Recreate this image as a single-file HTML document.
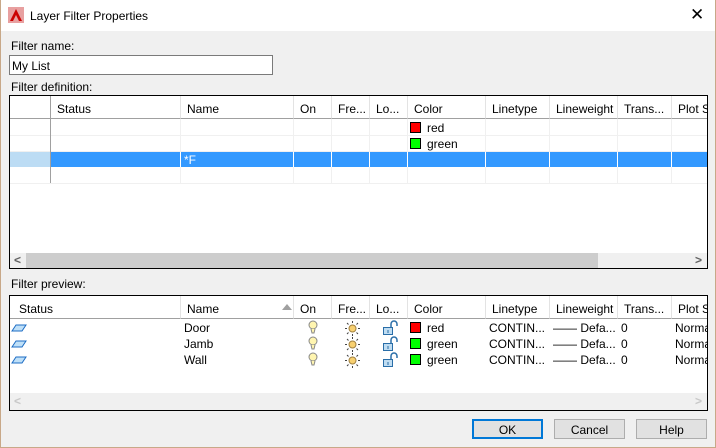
<!DOCTYPE html><html><head><style>
*{box-sizing:border-box;margin:0;padding:0}
body{width:716px;height:448px;overflow:hidden;font:12px "Liberation Sans",sans-serif;color:#000;background:#c8a888;position:relative}
.win{position:absolute;left:1px;top:0;width:714px;height:447px;background:#f0f0f0}
.title{position:absolute;left:0;top:0;width:714px;height:31px;background:#fff}
.a{position:absolute;white-space:nowrap}
.grid{position:absolute;left:8px;width:699px;border:1px solid #000;background:#fff;overflow:hidden}
.hd{position:absolute;top:0;height:23px;border-right:1px solid #e3e3e3;border-bottom:1px solid #a0a0a0;padding:6px 0 0 6px;white-space:nowrap;overflow:hidden}
.vl{position:absolute;width:1px;background:#f0f0f0}
.hl{position:absolute;height:1px;background:#f0f0f0}
.sw{display:inline-block;width:11px;height:11px;border:1px solid #000;vertical-align:-1px;margin-right:6px}
.btn{position:absolute;top:419px;width:71px;height:20px;border:1px solid #adadad;background:#e1e1e1;text-align:center;padding-top:3px}
</style></head><body><div class="win">
<div class="title">
<svg class="a" style="left:7px;top:7px" width="16" height="16"><rect width="16" height="16" fill="#e8a0a0"/><path d="M2 14 L8 2 L14 14 L11 14 L8 8 L5 14Z" fill="#c00"/></svg>
<div class="a" style="left:29px;top:9px;font-size:12px">Layer Filter Properties</div>
<div class="a" style="left:689px;top:5px;font-size:17px">✕</div>
</div>
<div class="a" style="left:10px;top:39px">Filter name:</div>
<div class="a" style="left:8px;top:55px;width:264px;height:20px;border:1px solid #7a7a7a;background:#fff;padding:3px 2px">My List</div>
<div class="a" style="left:10px;top:80px">Filter definition:</div>

<div class="grid" style="top:95px;height:174px">
<div class="hd" style="left:0;width:41px;border-right:1px solid #a0a0a0"></div>
<div class="hd" style="left:41px;width:130px">Status</div>
<div class="hd" style="left:171px;width:113px">Name</div>
<div class="hd" style="left:284px;width:38px">On</div>
<div class="hd" style="left:322px;width:38px">Fre...</div>
<div class="hd" style="left:360px;width:38px">Lo...</div>
<div class="hd" style="left:398px;width:78px">Color</div>
<div class="hd" style="left:476px;width:64px">Linetype</div>
<div class="hd" style="left:540px;width:68px">Lineweight</div>
<div class="hd" style="left:608px;width:54px">Trans...</div>
<div class="hd" style="left:662px;width:40px">Plot S</div>
<div class="hl" style="left:0;top:39px;width:699px"></div>
<div class="hl" style="left:0;top:55px;width:699px"></div>
<div class="hl" style="left:0;top:87px;width:699px"></div>
<div class="vl" style="left:170px;top:23px;height:64px"></div>
<div class="vl" style="left:283px;top:23px;height:64px"></div>
<div class="vl" style="left:321px;top:23px;height:64px"></div>
<div class="vl" style="left:359px;top:23px;height:64px"></div>
<div class="vl" style="left:397px;top:23px;height:64px"></div>
<div class="vl" style="left:475px;top:23px;height:64px"></div>
<div class="vl" style="left:539px;top:23px;height:64px"></div>
<div class="vl" style="left:607px;top:23px;height:64px"></div>
<div class="vl" style="left:661px;top:23px;height:64px"></div>
<div class="a" style="left:40px;top:23px;width:1px;height:64px;background:#a0a0a0"></div>
<div class="a" style="left:0;top:56px;width:40px;height:15px;background:#bcdcf4"></div>
<div class="a" style="left:41px;top:56px;width:658px;height:15px;background:#3399ff"></div>
<div class="a" style="left:170px;top:56px;width:1px;height:15px;background:#fff"></div>
<div class="a" style="left:283px;top:56px;width:1px;height:15px;background:#fff"></div>
<div class="a" style="left:321px;top:56px;width:1px;height:15px;background:#fff"></div>
<div class="a" style="left:359px;top:56px;width:1px;height:15px;background:#fff"></div>
<div class="a" style="left:397px;top:56px;width:1px;height:15px;background:#fff"></div>
<div class="a" style="left:475px;top:56px;width:1px;height:15px;background:#fff"></div>
<div class="a" style="left:539px;top:56px;width:1px;height:15px;background:#fff"></div>
<div class="a" style="left:607px;top:56px;width:1px;height:15px;background:#fff"></div>
<div class="a" style="left:661px;top:56px;width:1px;height:15px;background:#fff"></div>
<div class="a" style="left:174px;top:57px;color:#fff">*F</div>
<div class="a" style="left:400px;top:25px"><span class="sw" style="background:#f00"></span>red</div>
<div class="a" style="left:400px;top:41px"><span class="sw" style="background:#0f0"></span>green</div>
<div class="a" style="left:0;top:157px;width:699px;height:16px;background:#f0f0f0"></div>
<div class="a" style="left:16px;top:157px;width:572px;height:16px;background:#cdcdcd"></div>
<div class="a" style="left:4px;top:157px;color:#606060;font-weight:bold">&lt;</div>
<div class="a" style="left:685px;top:157px;color:#606060;font-weight:bold">&gt;</div>
</div>

<div class="a" style="left:10px;top:277px">Filter preview:</div>
<div class="grid" style="top:295px;height:116px">
<div class="hd" style="left:0;width:171px;padding-left:9px">Status</div>
<div class="hd" style="left:171px;width:113px">Name<span style="position:absolute;left:101px;top:8px;width:0;height:0;border:5px solid transparent;border-bottom:6px solid #a0a0a0;border-top:0"></span></div>
<div class="hd" style="left:284px;width:38px">On</div>
<div class="hd" style="left:322px;width:38px">Fre...</div>
<div class="hd" style="left:360px;width:38px">Lo...</div>
<div class="hd" style="left:398px;width:78px">Color</div>
<div class="hd" style="left:476px;width:64px">Linetype</div>
<div class="hd" style="left:540px;width:68px">Lineweight</div>
<div class="hd" style="left:608px;width:54px">Trans...</div>
<div class="hd" style="left:662px;width:40px">Plot S</div>
<div class="a" style="left:0;top:24px;width:699px;line-height:16px">
<div style="position:relative;height:16px"><svg class="a" style="left:1px;top:4px" width="16" height="8"><path d="M1 7 L5 1 L15 1 L11 7Z" fill="#bfe0f8" stroke="#1c6cc4"/></svg><span class="a" style="left:174px">Door</span><svg class="a" style="left:298px;top:0" width="10" height="15"><circle cx="5" cy="5" r="4" fill="#fff5b0" stroke="#888"/><path d="M3 9 L4 13 L6 13 L7 9" fill="#fff5b0" stroke="#888"/></svg><svg class="a" style="left:335px;top:1px" width="15" height="15"><circle cx="7.5" cy="7.5" r="3.5" fill="#f8d070" stroke="#a08040"/><path d="M7.5 0v2M7.5 13v2M0 7.5h2M13 7.5h2M2 2l1.5 1.5M11.5 11.5L13 13M2 13l1.5-1.5M11.5 3.5L13 2" stroke="#444"/></svg><svg class="a" style="left:372px;top:0" width="16" height="16"><path d="M9 8V4a3 3 0 0 1 6 0v2" fill="none" stroke="#2a6ea8" stroke-width="1.5"/><rect x="1.5" y="7.5" width="9" height="7" fill="#c0ddf2" stroke="#2a6ea8"/><path d="M6 10v3" stroke="#2a6ea8"/></svg><span class="a" style="left:400px"><span class="sw" style="background:#f00"></span>red</span><span class="a" style="left:479px">CONTIN...</span><span class="a" style="left:543px">—— Defa...</span><span class="a" style="left:611px">0</span><span class="a" style="left:665px">Norma</span></div>
<div style="position:relative;height:16px"><svg class="a" style="left:1px;top:4px" width="16" height="8"><path d="M1 7 L5 1 L15 1 L11 7Z" fill="#bfe0f8" stroke="#1c6cc4"/></svg><span class="a" style="left:174px">Jamb</span><svg class="a" style="left:298px;top:0" width="10" height="15"><circle cx="5" cy="5" r="4" fill="#fff5b0" stroke="#888"/><path d="M3 9 L4 13 L6 13 L7 9" fill="#fff5b0" stroke="#888"/></svg><svg class="a" style="left:335px;top:1px" width="15" height="15"><circle cx="7.5" cy="7.5" r="3.5" fill="#f8d070" stroke="#a08040"/><path d="M7.5 0v2M7.5 13v2M0 7.5h2M13 7.5h2M2 2l1.5 1.5M11.5 11.5L13 13M2 13l1.5-1.5M11.5 3.5L13 2" stroke="#444"/></svg><svg class="a" style="left:372px;top:0" width="16" height="16"><path d="M9 8V4a3 3 0 0 1 6 0v2" fill="none" stroke="#2a6ea8" stroke-width="1.5"/><rect x="1.5" y="7.5" width="9" height="7" fill="#c0ddf2" stroke="#2a6ea8"/><path d="M6 10v3" stroke="#2a6ea8"/></svg><span class="a" style="left:400px"><span class="sw" style="background:#0f0"></span>green</span><span class="a" style="left:479px">CONTIN...</span><span class="a" style="left:543px">—— Defa...</span><span class="a" style="left:611px">0</span><span class="a" style="left:665px">Norma</span></div>
<div style="position:relative;height:16px"><svg class="a" style="left:1px;top:4px" width="16" height="8"><path d="M1 7 L5 1 L15 1 L11 7Z" fill="#bfe0f8" stroke="#1c6cc4"/></svg><span class="a" style="left:174px">Wall</span><svg class="a" style="left:298px;top:0" width="10" height="15"><circle cx="5" cy="5" r="4" fill="#fff5b0" stroke="#888"/><path d="M3 9 L4 13 L6 13 L7 9" fill="#fff5b0" stroke="#888"/></svg><svg class="a" style="left:335px;top:1px" width="15" height="15"><circle cx="7.5" cy="7.5" r="3.5" fill="#f8d070" stroke="#a08040"/><path d="M7.5 0v2M7.5 13v2M0 7.5h2M13 7.5h2M2 2l1.5 1.5M11.5 11.5L13 13M2 13l1.5-1.5M11.5 3.5L13 2" stroke="#444"/></svg><svg class="a" style="left:372px;top:0" width="16" height="16"><path d="M9 8V4a3 3 0 0 1 6 0v2" fill="none" stroke="#2a6ea8" stroke-width="1.5"/><rect x="1.5" y="7.5" width="9" height="7" fill="#c0ddf2" stroke="#2a6ea8"/><path d="M6 10v3" stroke="#2a6ea8"/></svg><span class="a" style="left:400px"><span class="sw" style="background:#0f0"></span>green</span><span class="a" style="left:479px">CONTIN...</span><span class="a" style="left:543px">—— Defa...</span><span class="a" style="left:611px">0</span><span class="a" style="left:665px">Norma</span></div>
</div>
<div class="a" style="left:0;top:97px;width:699px;height:17px;background:#f0f0f0"></div>
<div class="a" style="left:4px;top:98px;color:#c8c8c8;font-weight:bold">&lt;</div>
<div class="a" style="left:685px;top:98px;color:#c8c8c8;font-weight:bold">&gt;</div>
</div>

<div class="btn" style="left:471px;border:2px solid #0078d7;padding-top:2px">OK</div>
<div class="btn" style="left:553px">Cancel</div>
<div class="btn" style="left:635px">Help</div>
</div></body></html>
